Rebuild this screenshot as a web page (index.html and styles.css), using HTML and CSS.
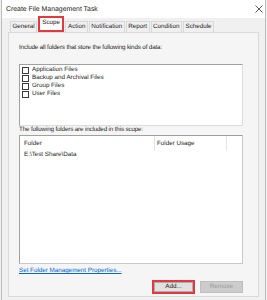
FILE: index.html
```html
<!DOCTYPE html>
<html>
<head>
<meta charset="utf-8">
<link rel="stylesheet" href="styles.css">
</head>
<body>
<div class="dialog">
  <div class="titlebar">
    <span class="title">Create File Management Task</span>
    <svg class="close" width="8" height="8" viewBox="0 0 8 8"><path d="M0.5 0.5L7.5 7.5M7.5 0.5L0.5 7.5" stroke="#2b2b2b" stroke-width="0.8" fill="none"/></svg>
  </div>
  <div class="tabs">
    <div class="tab">General</div>
    <div class="tab active">Scope</div>
    <div class="tab">Action</div>
    <div class="tab">Notification</div>
    <div class="tab">Report</div>
    <div class="tab">Condition</div>
    <div class="tab">Schedule</div>
  </div>
  <div class="panel">
    <div class="label first">Include all folders that store the following kinds of data:</div>
    <div class="checklist">
      <div class="item"><span class="box"></span>Application Files</div>
      <div class="item"><span class="box"></span>Backup and Archival Files</div>
      <div class="item"><span class="box"></span>Group Files</div>
      <div class="item"><span class="box"></span>User Files</div>
    </div>
    <div class="label">The following folders are included in this scope:</div>
    <div class="listview">
      <div class="header">
        <div class="col c1">Folder</div>
        <div class="col c2">Folder Usage</div>
      </div>
      <div class="row">E:\Test Share\Data</div>
    </div>
    <div class="linkrow"><a class="link">Set Folder Management Properties...</a></div>
    <div class="buttons">
      <div class="hl"><div class="btn">Add...</div></div>
      <div class="btn disabled">Remove</div>
    </div>
  </div>
</div>
</body>
</html>
```

FILE: styles.css
```css
html, body {
  margin: 0;
  padding: 0;
  background: #f0f0f0;
}
body {
  font-family: "Liberation Sans", Arial, sans-serif;
  font-size: 6.25px;
  text-rendering: geometricPrecision;
  color: #1e1e1e;
}
.dialog {
  width: 265px;
  height: 300px;
  margin-left: 1px;
  box-sizing: border-box;
  border-left: 1px solid #bdbdbd;
  border-right: 1px solid #bdbdbd;
  background: #f0f0f0;
  display: flex;
  flex-direction: column;
}
.titlebar {
  height: 18px;
  flex: none;
  background: #ffffff;
  display: flex;
  align-items: center;
  justify-content: space-between;
  padding: 0 2px 0 4px;
}
.title {
  font-size: 6.9px;
  color: #222;
}
.close {
  display: block;
}
.tabs {
  display: flex;
  align-items: flex-end;
  height: 14px;
  flex: none;
  padding-left: 8px;
}
.tab {
  height: 10px;
  line-height: 10px;
  padding: 0 1.5px;
  margin-right: 1px;
  border: 1px solid #d9d9d9;
  border-bottom: none;
  background: #f0f0f0;
  color: #222;
}
.tab.active {
  height: 12px;
  line-height: 9px;
  background: #fbfbfb;
  border: 2px solid #e0393e;
  padding: 0 2.5px;
  margin: 0 1px 0 -0.5px;
}
.panel {
  flex: 1;
  margin: 0 6px 3px 6px;
  border: 1px solid #dadada;
  background: #f5f5f5;
  padding: 0 15px 0 10px;
  display: flex;
  flex-direction: column;
}
.label {
  line-height: 8px;
  letter-spacing: -0.15px;
}
.label.first {
  margin-top: 11px;
}
.checklist {
  margin-top: 12px;
  height: 62px;
  box-sizing: border-box;
  background: #fff;
  border: 1px solid;
  border-color: #a0a0a0 #dcdcdc #dcdcdc #a0a0a0;
  padding-top: 1px;
}
.item {
  display: flex;
  align-items: center;
  height: 8px;
  line-height: 8px;
}
.box {
  border: 1px solid #3a3a3a;
  background: #fff;
  margin: 0 3px 0 2px;
  box-sizing: border-box;
  width: 7px;
  height: 7px;
}
.listview {
  margin-top: 1px;
  height: 129px;
  box-sizing: border-box;
  background: #fff;
  border: 1px solid;
  border-color: #a0a0a0 #c8c8c8 #c8c8c8 #a0a0a0;
}
.header {
  display: flex;
  height: 15px;
}
.col {
  line-height: 15px;
  box-sizing: border-box;
  border-right: 1px solid #e5e5e5;
}
.c1 { width: 135px; padding-left: 4px; }
.c2 { width: 72px; padding-left: 2px; }
.row {
  padding-left: 4px;
  line-height: 8px;
}
.linkrow {
  margin-top: 3px;
  line-height: 8px;
}
.link {
  color: #0066cc;
  text-decoration: underline;
}
.buttons {
  display: flex;
  justify-content: flex-end;
  align-items: center;
  margin-top: 5px;
  gap: 5px;
}
.hl {
  border: 2px solid #e0393e;
  width: 43px;
  height: 14px;
  box-sizing: border-box;
  display: flex;
}
.btn {
  flex: 1;
  height: 10px;
  box-sizing: border-box;
  background: #e1e1e1;
  border: 1px solid #adadad;
  line-height: 8px;
  text-align: center;
  color: #222;
}
.btn.disabled {
  flex: none;
  width: 43px;
  height: 12px;
  line-height: 10px;
  background: #cccccc;
  border-color: #bfbfbf;
  color: #9a9a9a;
}
```
